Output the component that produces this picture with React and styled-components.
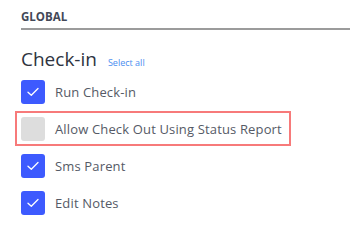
import React from "react";
import styled, { createGlobalStyle } from "styled-components";

const Global = createGlobalStyle`
  html, body { margin: 0; padding: 0; background: #fff; }
  body { font-family: "Open Sans", "Noto Sans", sans-serif; }
`;

const Page = styled.div`
  width: 350px;
  height: 250px;
  overflow: hidden;
  padding-top: 11px;
  box-sizing: border-box;
`;

const SectionHead = styled.div`
  margin-left: 21px;
  padding-bottom: 5px;
  border-bottom: 2px solid #9b9b9b;
  font-size: 11.5px;
  font-weight: 700;
  color: #434857;
  line-height: 12px;
`;

const TitleRow = styled.div`
  display: flex;
  align-items: baseline;
  gap: 11px;
  margin: 17px 0 0 21px;
`;

const Title = styled.h2`
  margin: 0;
  font-size: 19px;
  font-weight: 400;
  color: #2e3340;
  line-height: 24px;
`;

const SelectAll = styled.a`
  font-size: 9px;
  color: #4a8ef0;
  cursor: pointer;
`;

const List = styled.div`
  display: flex;
  flex-direction: column;
  gap: 13px;
  margin-top: 9px;
`;

const Row = styled.label`
  display: flex;
  align-items: center;
  gap: 10px;
  height: 24px;
  padding-left: 21px;
  box-sizing: border-box;
  position: relative;
  white-space: nowrap;
  ${(p) =>
    p.$highlight &&
    `
    &::before {
      content: "";
      position: absolute;
      left: 15px;
      top: -6px;
      width: 276px;
      height: 35px;
      border: 2px solid #f77a7a;
      box-sizing: border-box;
    }
  `}
`;

const Box = styled.span`
  width: 24px;
  height: 24px;
  border-radius: 3px;
  background: ${(p) => (p.$checked ? "#3d5afe" : "#dddddd")};
  display: flex;
  align-items: center;
  justify-content: center;
  flex-shrink: 0;
`;

const Label = styled.span`
  font-size: 13px;
  color: #555a66;
  letter-spacing: 0.15px;
`;

const Check = () => (
  <svg width="12" height="10" viewBox="0 0 12 10" fill="none">
    <path d="M1 5.2 L4.3 8.3 L11 1.5" stroke="#fff" strokeWidth="1.3" strokeLinecap="round" strokeLinejoin="round" />
  </svg>
);

const items = [
  { label: "Run Check-in", checked: true },
  { label: "Allow Check Out Using Status Report", checked: false, highlight: true },
  { label: "Sms Parent", checked: true },
  { label: "Edit Notes", checked: true },
];

export default function App() {
  return (
    <Page>
      <Global />
      <SectionHead>GLOBAL</SectionHead>
      <TitleRow>
        <Title>Check-in</Title>
        <SelectAll>Select all</SelectAll>
      </TitleRow>
      <List>
        {items.map((it) => (
          <Row key={it.label} $highlight={it.highlight}>
            <Box $checked={it.checked}>{it.checked && <Check />}</Box>
            <Label>{it.label}</Label>
          </Row>
        ))}
      </List>
    </Page>
  );
}
